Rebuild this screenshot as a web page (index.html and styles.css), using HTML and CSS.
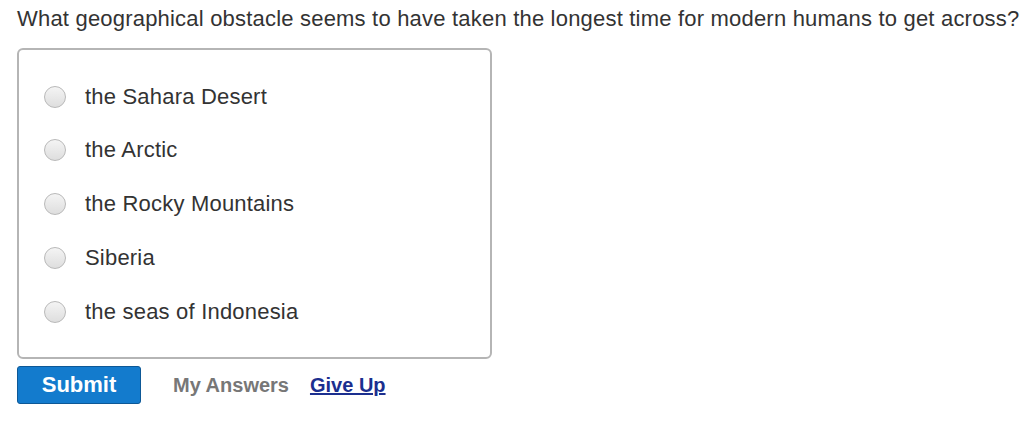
FILE: index.html
```html
<!DOCTYPE html>
<html>
<head>
<meta charset="utf-8">
<link rel="stylesheet" href="styles.css">
</head>
<body>
<div class="page">
  <p class="question">What geographical obstacle seems to have taken the longest time for modern humans to get across?</p>
  <div class="choices">
    <label class="choice"><span class="radio"></span><span class="label">the Sahara Desert</span></label>
    <label class="choice"><span class="radio"></span><span class="label">the Arctic</span></label>
    <label class="choice"><span class="radio"></span><span class="label">the Rocky Mountains</span></label>
    <label class="choice"><span class="radio"></span><span class="label">Siberia</span></label>
    <label class="choice"><span class="radio"></span><span class="label">the seas of Indonesia</span></label>
  </div>
  <div class="actions">
    <button class="submit">Submit</button>
    <span class="my-answers">My Answers</span>
    <a class="give-up" href="#">Give Up</a>
  </div>
</div>
</body>
</html>
```

FILE: styles.css
```css
html, body {
  margin: 0;
  padding: 0;
  background: #fff;
}
.page {
  padding: 0 0 0 17px;
  font-family: "Liberation Sans", Arial, sans-serif;
  color: #333;
}
.question {
  margin: 0;
  padding-top: 5px;
  font-size: 22px;
  letter-spacing: 0.2px;
  line-height: 28px;
  white-space: nowrap;
}
.choices {
  margin-top: 15px;
  width: 475px;
  height: 311px;
  border: 2px solid #b5b5b5;
  border-radius: 6px;
  box-sizing: border-box;
  padding: 35px 0 0 25px;
  display: flex;
  flex-direction: column;
  gap: 30.8px;
}
.choice {
  display: flex;
  align-items: center;
  height: 23px;
  font-size: 22px;
  letter-spacing: 0.2px;
}
.radio {
  width: 20px;
  height: 20px;
  border-radius: 50%;
  border: 1px solid #b9b9b9;
  background: linear-gradient(#f4f4f4, #dedede);
  flex: none;
}
.label {
  margin-left: 19px;
}
.actions {
  margin-top: 7px;
  display: flex;
  align-items: center;
}
.submit {
  width: 124px;
  height: 38px;
  background: #137bcd;
  border: 1px solid #0d5896;
  border-radius: 3px;
  color: #fff;
  font-family: "Liberation Sans", Arial, sans-serif;
  font-weight: bold;
  font-size: 22px;
  padding: 0;
}
.my-answers {
  margin-left: 32px;
  font-weight: bold;
  font-size: 20px;
  color: #777;
}
.give-up {
  margin-left: 21px;
  font-weight: bold;
  font-size: 20px;
  color: #1b2f8f;
  text-decoration: underline;
}
```
